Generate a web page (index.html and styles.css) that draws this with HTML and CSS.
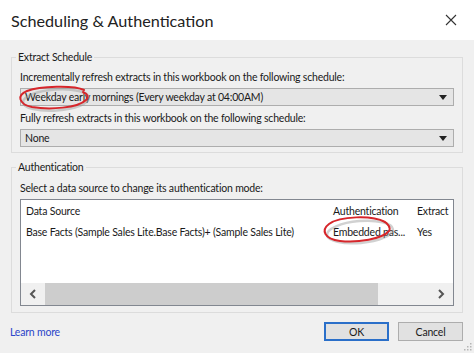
FILE: index.html
```html
<!DOCTYPE html>
<html lang="en">
<head>
  <meta charset="UTF-8" />
  <title>Scheduling &amp; Authentication</title>
  <link rel="stylesheet" href="styles.css">
</head>
<body>
  <div class="dialog">
    <div class="title-bar">
      <span class="title">Scheduling &amp; Authentication</span>
      <svg class="close-icon" width="12" height="12" viewBox="0 0 12 12">
        <path d="M1 1L11 11M11 1L1 11" stroke="#333" stroke-width="1.1" fill="none"/>
      </svg>
    </div>

    <div class="content">
      <fieldset class="group">
        <legend>Extract Schedule</legend>
        <div class="field-label">Incrementally refresh extracts in this workbook on the following schedule:</div>
        <div class="select">
          <span>Weekday early mornings (Every weekday at 04:00AM)</span>
          <svg class="select-arrow" width="8" height="5" viewBox="0 0 8 5"><path d="M0 0H8L4 5Z" fill="#222"/></svg>
        </div>
        <div class="field-label second">Fully refresh extracts in this workbook on the following schedule:</div>
        <div class="select">
          <span>None</span>
          <svg class="select-arrow" width="8" height="5" viewBox="0 0 8 5"><path d="M0 0H8L4 5Z" fill="#222"/></svg>
        </div>
      </fieldset>

      <fieldset class="group auth">
        <legend>Authentication</legend>
        <div class="field-label">Select a data source to change its authentication mode:</div>
        <div class="list-box">
          <div class="list-row list-head">
            <div class="col-source">Data Source</div>
            <div class="col-auth">Authentication</div>
            <div class="col-extract">Extract</div>
          </div>
          <div class="list-row">
            <div class="col-source">Base Facts (Sample Sales Lite.Base Facts)+ (Sample Sales Lite)</div>
            <div class="col-auth">Embedded pas...</div>
            <div class="col-extract">Yes</div>
          </div>
          <div class="list-fill"></div>
          <div class="h-scroll">
            <div class="scroll-btn">
              <svg width="8" height="10" viewBox="0 0 8 10"><path d="M6 1L2 5L6 9" stroke="#555" stroke-width="2" fill="none"/></svg>
            </div>
            <div class="scroll-thumb"></div>
            <div class="scroll-track"></div>
            <div class="scroll-btn">
              <svg width="8" height="10" viewBox="0 0 8 10"><path d="M2 1L6 5L2 9" stroke="#555" stroke-width="2" fill="none"/></svg>
            </div>
          </div>
        </div>
      </fieldset>

      <div class="footer">
        <a class="learn-more" href="#">Learn more</a>
        <div class="button-group">
          <button class="dlg-button default">OK</button>
          <button class="dlg-button">Cancel</button>
        </div>
      </div>
    </div>

    <!-- red marker circles drawn over the screenshot -->
    <svg class="marks" width="474" height="353" viewBox="0 0 474 353">
      <g fill="none" stroke-linecap="round">
        <ellipse cx="56" cy="100" rx="33" ry="10.5" transform="rotate(-4 56 100)" stroke="#9a9a9a" stroke-width="2.5" opacity="0.45"/>
        <path d="M84 90C74 85 40 86 27 91C17 95 18 104 32 107C50 110 78 108 86 100C89 97 88 94 83 92" stroke="#d6262b" stroke-width="2"/>
        <ellipse cx="360" cy="232" rx="33" ry="11" transform="rotate(-5 360 232)" stroke="#9a9a9a" stroke-width="2.5" opacity="0.45"/>
        <path d="M385 222C372 215 340 216 329 224C321 230 324 239 340 241C358 243 382 239 389 231C391 228 388 223 383 221" stroke="#d6262b" stroke-width="2"/>
      </g>
    </svg>
    <svg class="grip" width="8" height="8" viewBox="0 0 8 8">
      <g fill="#b5b5b5">
        <rect x="6" y="0" width="1.5" height="1.5"/>
        <rect x="3" y="3" width="1.5" height="1.5"/><rect x="6" y="3" width="1.5" height="1.5"/>
        <rect x="0" y="6" width="1.5" height="1.5"/><rect x="3" y="6" width="1.5" height="1.5"/><rect x="6" y="6" width="1.5" height="1.5"/>
      </g>
    </svg>
  </div>
</body>
</html>
```

FILE: styles.css
```css
* {
  box-sizing: border-box;
}
body {
  margin: 0;
  background: #f0f0f0;
  font-family: Lato, "Liberation Sans", sans-serif;
  font-size: 10.5px;
  letter-spacing: -0.2px;
  color: #1a1a1a;
}
.dialog {
  position: relative;
  width: 474px;
  height: 353px;
  background: #f0f0f0;
  overflow: hidden;
}
.title-bar {
  height: 40px;
  background: #fff;
  display: flex;
  align-items: center;
  justify-content: space-between;
  padding: 0 17px 0 11px;
}
.title {
  font-size: 16.2px;
  letter-spacing: 0;
  color: #222;
}
.close-icon {
  margin-top: -1px;
}
.content {
  padding: 0 11px 0 11px;
}
.group {
  margin: 9px 0 0 0;
  padding: 4px 8px 5px 8px;
  border: 1px solid #dcdcdc;
  min-width: 0;
}
.group legend {
  padding: 0 2px;
  margin-left: -4px;
  line-height: 16px;
}
.group.auth {
  margin-top: 6px;
  padding-top: 5px;
  padding-bottom: 6px;
}
.field-label {
  line-height: 16px;
}
.field-label.second {
  margin-top: 4px;
}
.select {
  display: flex;
  align-items: center;
  justify-content: space-between;
  height: 18px;
  margin-top: 3px;
  padding: 0 5px 0 4px;
  background: #e5e5e5;
  border: 1px solid #adadad;
}
.select-arrow {
  margin-right: 1px;
}
.list-box {
  width: 434px;
  margin-top: 3px;
  height: 107px;
  background: #fff;
  border: 1px solid #828790;
  display: flex;
  flex-direction: column;
  overflow: hidden;
}
.list-row {
  display: flex;
  height: 21px;
  align-items: center;
  white-space: nowrap;
}
.list-row + .list-row {
  height: 22px;
}
.col-source {
  width: 307px;
  flex: none;
  padding-left: 5px;
  overflow: hidden;
}
.col-auth {
  width: 84px;
  flex: none;
  padding-left: 5px;
  overflow: hidden;
}
.col-extract {
  width: 41px;
  flex: none;
  padding-left: 5px;
  overflow: hidden;
}
.list-fill {
  flex: 1;
}
.h-scroll {
  display: flex;
  height: 22px;
  background: #f0f0f0;
}
.scroll-btn {
  width: 24px;
  flex: none;
  display: flex;
  align-items: center;
  justify-content: center;
}
.scroll-thumb {
  width: 333px;
  flex: none;
  background: #cdcdcd;
}
.scroll-track {
  flex: 1;
}
.footer {
  display: flex;
  align-items: center;
  justify-content: space-between;
  margin: 9px 0 0 -1px;
}
.learn-more {
  color: #2b45c9;
  text-decoration: none;
}
.button-group {
  display: flex;
  gap: 9px;
}
.dlg-button {
  width: 65px;
  height: 19px;
  padding: 0;
  font-family: inherit;
  font-size: 10.5px;
  letter-spacing: -0.2px;
  color: #1a1a1a;
  background: #e1e1e1;
  border: 1px solid #adadad;
}
.dlg-button.default {
  border: 2px solid #2a6fc9;
}
.marks {
  position: absolute;
  left: 0;
  top: 0;
  pointer-events: none;
}
.grip {
  position: absolute;
  right: 2px;
  bottom: 2px;
}
```
